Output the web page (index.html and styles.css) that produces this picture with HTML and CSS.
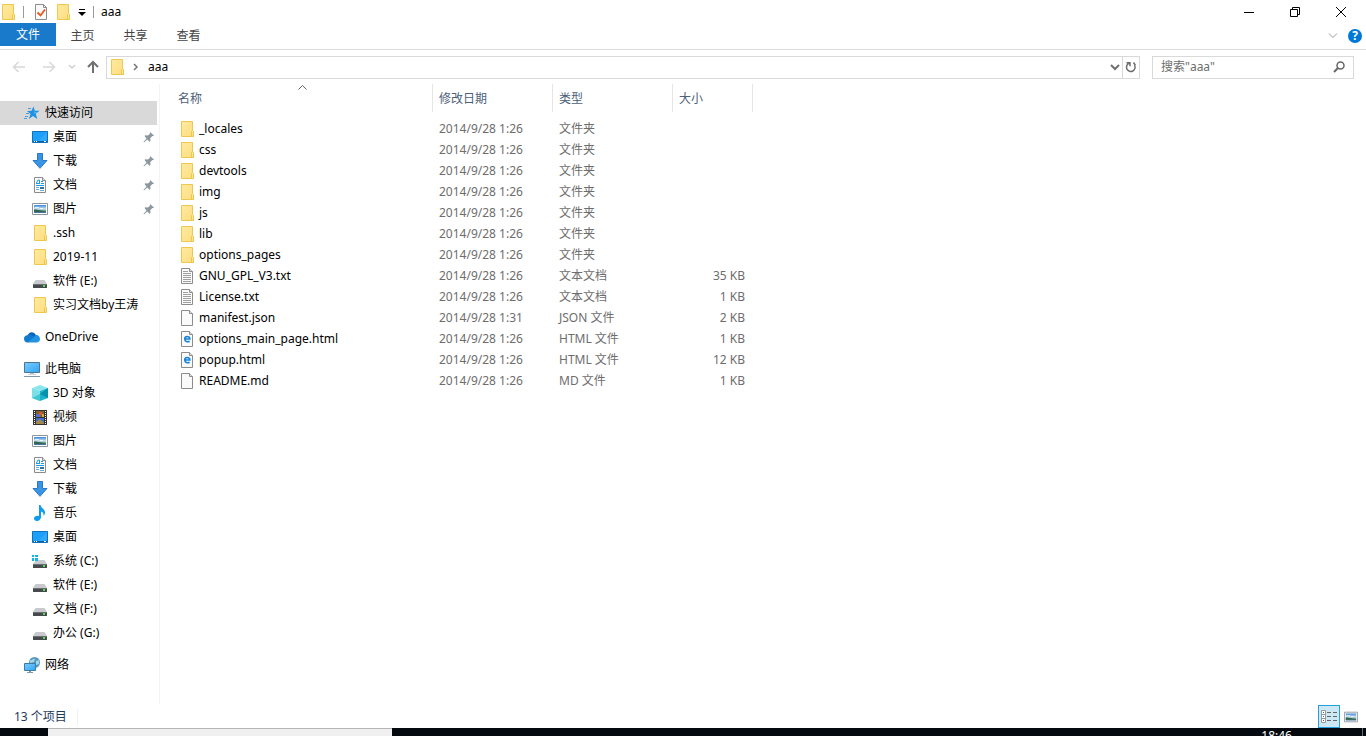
FILE: index.html
```html
<!DOCTYPE html>
<html lang="zh-CN">
<head>
    <meta charset="UTF-8">
    <title>aaa</title>
    <link rel="stylesheet" href="styles.css">
</head>
<body>
    <!-- icon sprite -->
    <svg class="sprite" xmlns="http://www.w3.org/2000/svg">
        <defs>
            <linearGradient id="gFolder" x1="0" y1="0" x2="1" y2="1"><stop offset="0" stop-color="#ffeaa0"/><stop offset="1" stop-color="#fddd80"/></linearGradient>
            <linearGradient id="gSky" x1="0" y1="0" x2="0" y2="1"><stop offset="0" stop-color="#3d86d8"/><stop offset="0.5" stop-color="#d4e8f4"/><stop offset="0.65" stop-color="#7fa9a6"/><stop offset="1" stop-color="#396aa0"/></linearGradient>
            <linearGradient id="gScreen" x1="0" y1="0" x2="1" y2="1"><stop offset="0" stop-color="#7bcbff"/><stop offset="1" stop-color="#2fa6f5"/></linearGradient>
        </defs>
        <symbol id="folder" viewBox="0 0 16 16">
            <path d="M2.500.5h11v9l1 1v5h-12z" fill="url(#gFolder)" stroke="#ecc850"/>
            <path d="M12.500 15V10.500l1-1 1 1v5z" fill="#ffe694" stroke="#ecc850"/>
        </symbol>
        <symbol id="page" viewBox="0 0 16 16">
            <path d="M2.500.5h8l3 3v12h-11z" fill="#fafafa" stroke="#8c8c8c"/>
            <path d="M10.500.5v3h3" fill="#e4e4e4" stroke="#8c8c8c"/>
        </symbol>
        <symbol id="text" viewBox="0 0 16 16">
            <use href="#page"/>
            <path d="M4 3.500h5M4 5.500h8M4 7.500h8M4 9.500h8M4 11.500h8M4 13.500h8" stroke="#a0a0a0"/>
        </symbol>
        <symbol id="html" viewBox="0 0 16 16">
            <use href="#page"/>
            <path d="M5.800 8h5c0-3.400-4.900-3.200-5-.1-.1 2.800 2.800 3.400 4.800 2.300" fill="none" stroke="#1683d8" stroke-width="1.700"/>
        </symbol>
        <symbol id="check" viewBox="0 0 16 16">
            <path d="M2.500.5h8l3 3v12h-11z" fill="#fafafa" stroke="#8c8c8c"/>
            <path d="M10.500.5v3h3" fill="none" stroke="#8c8c8c"/>
            <path d="M4.500 8.500l3 3 4.500-6" fill="none" stroke="#e8571b" stroke-width="1.800"/>
        </symbol>
        <symbol id="star" viewBox="0 0 16 16">
            <path d="M9.500 1.500l1.300 4.200 4.700.1-3.700 2.900 1.500 5.300-4.300-3-4.200 3 1.700-4.900-3.500-3.200 4.500-.1z" fill="#1f93e0"/>
            <path d="M9.500 4l1 3h3l-3 2z" fill="#4fb8f5"/>
            <path d="M4 3.500h3M2 8.500h3M1 11.500h3M0 13.500h3" stroke="#4c9ed8"/>
        </symbol>
        <symbol id="desktop" viewBox="0 0 16 16">
            <path d="M.5 2.500h15v11H.5z" fill="#1ca0fc" stroke="#1270b8"/>
            <path d="M15 3v8L5 13z" fill="#42b2ff" opacity=".5"/>
            <path d="M1 12.500h14" stroke="#0b60a4"/>
            <path d="M2 12.500h1M4 12.500h1M12 12.500h2" stroke="#fff"/>
        </symbol>
        <symbol id="download" viewBox="0 0 16 16">
            <path d="M5.500.5h5v7h4.500L8 15.300 1 7.500h4.500z" fill="#3b93e3" stroke="#2a79c8"/>
        </symbol>
        <symbol id="document" viewBox="0 0 16 16">
            <use href="#page"/>
            <path d="M4 6.500h3M9 4.500h2M9 6.500h3M4 8.500h8" stroke="#1e9be4"/>
            <path d="M4.500 6l1.500-3h1.500v4" fill="none" stroke="#1e9be4"/>
            <path d="M4 10.500h3M4 12.500h3M8 13.500h4" stroke="#6fb0d6"/>
            <path d="M8 10h4v2H8z" fill="#2c75a0"/>
        </symbol>
        <symbol id="picture" viewBox="0 0 16 16">
            <path d="M.5 2.500h15v11H.5z" fill="#fff" stroke="#8d959c"/>
            <path d="M2 4h12v8H2z" fill="url(#gSky)"/>
            <path d="M2 8.500c3 0 5 .5 12 2v.5H2z" fill="#35664f"/>
            <path d="M3 6.500h4M8 7.500h3" stroke="#fff" opacity=".8"/>
        </symbol>
        <symbol id="drive" viewBox="0 0 16 16">
            <path d="M3.500 7h9L15 11H1z" fill="#c8cbcd"/>
            <path d="M1 11h14v4H1z" fill="#464a4c"/>
            <path d="M1 11.500h14" stroke="#6c7072"/>
            <path d="M11 12h2v2h-2z" fill="#4fe04f"/>
        </symbol>
        <symbol id="system" viewBox="0 0 16 16">
            <path d="M4 7h8.500L15 11H1z" fill="#c8cbcd"/>
            <path d="M1 11h14v4H1z" fill="#464a4c"/>
            <path d="M1 11.500h14" stroke="#6c7072"/>
            <path d="M11 12h2v2h-2z" fill="#4fe04f"/>
            <path d="M0 2h2v2H0zM3 2h3v2H3zM0 5h2v3H0zM3 5h3v3H3z" fill="#0db4ee"/>
        </symbol>
        <symbol id="cloud" viewBox="0 0 16 16">
            <path d="M3.500 6.500C5 2.500 9.500 2 11.500 5.500L13 9 5 13z" fill="#0866ba"/>
            <path d="M3.500 6.200C1 6.300 0 8 0 9.800 0 12 1.500 13.500 3.500 13.500L13 9.500 8 6.500C6.500 5.700 5 5.700 3.500 6.200z" fill="#0f7bd0"/>
            <path d="M9 9l3-3c2-.5 4 1.500 4 4 0 2-1.500 3.500-3.500 3.500h-9z" fill="#2394e2"/>
        </symbol>
        <symbol id="pc" viewBox="0 0 16 16">
            <path d="M.5 1.500h15v10H.5z" fill="url(#gScreen)" stroke="#4b7795"/>
            <path d="M6 12.500h4" stroke="#b9c3ca"/>
            <path d="M4 13.500h8" stroke="#d0d6da"/>
            <path d="M0 15.500h16" stroke="#8197ab"/>
        </symbol>
        <symbol id="cube" viewBox="0 0 16 16">
            <path d="M0 3l8-3 8 3-8 3z" fill="#8ee6ec"/>
            <path d="M0 3l8 3v10l-8-3z" fill="#7be0e6"/>
            <path d="M0 13l8-4v7z" fill="#3fc5d4"/>
            <path d="M16 3L8 6v10l8-3z" fill="#19b4cb"/>
            <path d="M16 3v10L8 9z" fill="#0590ac"/>
        </symbol>
        <symbol id="video" viewBox="0 0 16 16">
            <path d="M1 1h14v15H1z" fill="#38332f"/>
            <path d="M4 2h8v6H4z" fill="#77672e"/>
            <path d="M4 5h4v3H4z" fill="#4d72d4"/>
            <path d="M7 3h3v3H7z" fill="#e4503b"/>
            <path d="M10 5h2v3h-2z" fill="#d5ac35"/>
            <path d="M4 9h8v6H4z" fill="#426dce"/>
            <path d="M4 13l4-3 4 4v1H4z" fill="#a38a4a"/>
            <path d="M2.500 2v13M13.500 2v13" stroke="#fff" stroke-dasharray="1 1"/>
        </symbol>
        <symbol id="music" viewBox="0 0 16 16">
            <path d="M7 0h1.500c.3 3 4.500 4 4.500 7.500 0 1.500-.6 2.500-1.500 3.500.5-3-1-4-2.500-4.500V12c0 2.200-1.600 4-4 4-1.800 0-3-1-3-2.500C2 11.500 4.500 10 7 11z" fill="#119bee"/>
        </symbol>
        <symbol id="network" viewBox="0 0 16 16">
            <circle cx="10.500" cy="5.500" r="5.500" fill="#5797bc"/>
            <path d="M6 3c2 1 3-2 5-1l-1 3-4 1zM12 4l3-1v4l-3 1z" fill="#a5d5e4"/>
            <path d="M.5 6.500h11v7H.5z" fill="url(#gScreen)" stroke="#397ca6"/>
            <path d="M5 14.500h2M3 15.500h6" stroke="#8197ab"/>
        </symbol>
        <symbol id="pin" viewBox="0 0 12 12">
            <path d="M7 1l4 3.500-1 .5-1 .3-1.800 2.200.3 2.500-1 .8-2.300-2.300L1 11.500l-.5-.5L3.500 7.500 1.500 5l.8-.8 2.500.2L6.800 3z" fill="#8b979f"/>
        </symbol>
    </svg>

    <header class="titlebar">
        <svg class="icon"><use href="#folder"/></svg>
        <span class="divider"></span>
        <button class="quick" aria-label="属性"><svg class="icon"><use href="#check"/></svg></button>
        <button class="quick" aria-label="新建文件夹"><svg class="icon"><use href="#folder"/></svg></button>
        <button class="customize" aria-label="自定义快速访问工具栏"><svg width="8" height="8" viewBox="0 0 8 8"><path d="M1 1.500h6" stroke="#000"/><path d="M0 4h8L4 8z"/></svg></button>
        <span class="divider"></span>
        <span class="title">aaa</span>
        <div class="window-buttons">
            <button aria-label="最小化"><svg width="12" height="12" viewBox="0 0 12 12"><path d="M1 6.500h10" stroke="#000"/></svg></button>
            <button aria-label="还原"><svg width="12" height="12" viewBox="0 0 12 12" fill="none" stroke="#000"><path d="M1.500 3.500h7v7h-7zM3.500 3V1.500h7v7H9"/></svg></button>
            <button aria-label="关闭"><svg width="12" height="12" viewBox="0 0 12 12" stroke="#000"><path d="M1 1l10 10M11 1L1 11"/></svg></button>
        </div>
    </header>

    <div class="ribbon">
        <button class="tab file-tab">文件</button>
        <button class="tab">主页</button>
        <button class="tab">共享</button>
        <button class="tab">查看</button>
        <div class="ribbon-right">
            <button aria-label="展开功能区"><svg width="10" height="6" viewBox="0 0 10 6" fill="none" stroke="#999"><path d="M1 .5l4 4 4-4"/></svg></button>
            <button class="help" aria-label="帮助">?</button>
        </div>
    </div>

    <div class="navbar">
        <button class="nav-back" aria-label="返回"><svg width="14" height="14" viewBox="0 0 14 14" fill="none" stroke="#d8d8d8" stroke-width="1.500"><path d="M13 7H2M6.500 2L1.500 7l5 5"/></svg></button>
        <button class="nav-forward" aria-label="前进"><svg width="14" height="14" viewBox="0 0 14 14" fill="none" stroke="#d8d8d8" stroke-width="1.500"><path d="M1 7h11M7.500 2l5 5-5 5"/></svg></button>
        <button class="nav-recent" aria-label="最近浏览的位置"><svg width="8" height="6" viewBox="0 0 8 6" fill="none" stroke="#d0d0d0" stroke-width="1.500"><path d="M1 1l3 3 3-3"/></svg></button>
        <button class="nav-up" aria-label="上移"><svg width="14" height="14" viewBox="0 0 14 14" fill="none" stroke="#707070" stroke-width="2"><path d="M7 13V2M2 7l5-5 5 5"/></svg></button>
        <div class="address">
            <svg class="icon"><use href="#folder"/></svg>
            <svg class="crumb-arrow" width="6" height="8" viewBox="0 0 6 8" fill="none" stroke="#777" stroke-width="1.500"><path d="M1 1l3 3-3 3"/></svg>
            <a class="crumb" href="#">aaa</a>
            <button class="history" aria-label="以前的位置"><svg width="10" height="7" viewBox="0 0 10 7" fill="none" stroke="#707070" stroke-width="2"><path d="M1 1l4 4 4-4"/></svg></button>
            <button class="refresh" aria-label="刷新"><svg width="12" height="12" viewBox="0 0 12 12" fill="none" stroke="#707070" stroke-width="1.500"><path d="M4 2.300A4.300 4.300 0 1 0 9.500 4M1.500 1.700H5v3.600M8.500 1.500l2 3"/></svg></button>
        </div>
        <div class="search">
            <input type="text" aria-label="搜索" placeholder="搜索&quot;aaa&quot;">
            <svg width="12" height="12" viewBox="0 0 12 12" fill="none" stroke="#666"><circle cx="7.500" cy="4.500" r="3.500" stroke-width="1.500"/><path d="M5 7l-4 4" stroke-width="2"/></svg>
        </div>
    </div>

    <div class="content">
        <nav class="sidebar">
            <ul>
                <li class="root selected"><a href="#"><svg class="icon"><use href="#star"/></svg>快速访问</a></li>
                <li><a href="#"><svg class="icon"><use href="#desktop"/></svg>桌面<svg class="pin"><use href="#pin"/></svg></a></li>
                <li><a href="#"><svg class="icon"><use href="#download"/></svg>下载<svg class="pin"><use href="#pin"/></svg></a></li>
                <li><a href="#"><svg class="icon"><use href="#document"/></svg>文档<svg class="pin"><use href="#pin"/></svg></a></li>
                <li><a href="#"><svg class="icon"><use href="#picture"/></svg>图片<svg class="pin"><use href="#pin"/></svg></a></li>
                <li><a href="#"><svg class="icon"><use href="#folder"/></svg>.ssh</a></li>
                <li><a href="#"><svg class="icon"><use href="#folder"/></svg>2019-11</a></li>
                <li><a href="#"><svg class="icon"><use href="#drive"/></svg>软件 (E:)</a></li>
                <li><a href="#"><svg class="icon"><use href="#folder"/></svg>实习文档by王涛</a></li>
            </ul>
            <ul>
                <li class="root"><a href="#"><svg class="icon"><use href="#cloud"/></svg>OneDrive</a></li>
            </ul>
            <ul>
                <li class="root"><a href="#"><svg class="icon"><use href="#pc"/></svg>此电脑</a></li>
                <li><a href="#"><svg class="icon"><use href="#cube"/></svg>3D 对象</a></li>
                <li><a href="#"><svg class="icon"><use href="#video"/></svg>视频</a></li>
                <li><a href="#"><svg class="icon"><use href="#picture"/></svg>图片</a></li>
                <li><a href="#"><svg class="icon"><use href="#document"/></svg>文档</a></li>
                <li><a href="#"><svg class="icon"><use href="#download"/></svg>下载</a></li>
                <li><a href="#"><svg class="icon"><use href="#music"/></svg>音乐</a></li>
                <li><a href="#"><svg class="icon"><use href="#desktop"/></svg>桌面</a></li>
                <li><a href="#"><svg class="icon"><use href="#system"/></svg>系统 (C:)</a></li>
                <li><a href="#"><svg class="icon"><use href="#drive"/></svg>软件 (E:)</a></li>
                <li><a href="#"><svg class="icon"><use href="#drive"/></svg>文档 (F:)</a></li>
                <li><a href="#"><svg class="icon"><use href="#drive"/></svg>办公 (G:)</a></li>
            </ul>
            <ul>
                <li class="root"><a href="#"><svg class="icon"><use href="#network"/></svg>网络</a></li>
            </ul>
        </nav>

        <main class="files">
            <table>
                <thead>
                    <tr>
                        <th class="col-name">名称<svg class="sort" width="9" height="5" viewBox="0 0 9 5" fill="none" stroke="#666"><path d="M.5 4.500l4-4 4 4"/></svg></th>
                        <th class="col-date">修改日期</th>
                        <th class="col-type">类型</th>
                        <th class="col-size">大小</th>
                    </tr>
                </thead>
                <tbody>
                    <tr><td><svg class="icon"><use href="#folder"/></svg>_locales</td><td>2014/9/28 1:26</td><td>文件夹</td><td></td></tr>
                    <tr><td><svg class="icon"><use href="#folder"/></svg>css</td><td>2014/9/28 1:26</td><td>文件夹</td><td></td></tr>
                    <tr><td><svg class="icon"><use href="#folder"/></svg>devtools</td><td>2014/9/28 1:26</td><td>文件夹</td><td></td></tr>
                    <tr><td><svg class="icon"><use href="#folder"/></svg>img</td><td>2014/9/28 1:26</td><td>文件夹</td><td></td></tr>
                    <tr><td><svg class="icon"><use href="#folder"/></svg>js</td><td>2014/9/28 1:26</td><td>文件夹</td><td></td></tr>
                    <tr><td><svg class="icon"><use href="#folder"/></svg>lib</td><td>2014/9/28 1:26</td><td>文件夹</td><td></td></tr>
                    <tr><td><svg class="icon"><use href="#folder"/></svg>options_pages</td><td>2014/9/28 1:26</td><td>文件夹</td><td></td></tr>
                    <tr><td><svg class="icon"><use href="#text"/></svg>GNU_GPL_V3.txt</td><td>2014/9/28 1:26</td><td>文本文档</td><td>35 KB</td></tr>
                    <tr><td><svg class="icon"><use href="#text"/></svg>License.txt</td><td>2014/9/28 1:26</td><td>文本文档</td><td>1 KB</td></tr>
                    <tr><td><svg class="icon"><use href="#page"/></svg>manifest.json</td><td>2014/9/28 1:31</td><td>JSON 文件</td><td>2 KB</td></tr>
                    <tr><td><svg class="icon"><use href="#html"/></svg>options_main_page.html</td><td>2014/9/28 1:26</td><td>HTML 文件</td><td>1 KB</td></tr>
                    <tr><td><svg class="icon"><use href="#html"/></svg>popup.html</td><td>2014/9/28 1:26</td><td>HTML 文件</td><td>12 KB</td></tr>
                    <tr><td><svg class="icon"><use href="#page"/></svg>README.md</td><td>2014/9/28 1:26</td><td>MD 文件</td><td>1 KB</td></tr>
                </tbody>
            </table>
        </main>
    </div>

    <footer class="statusbar">
        <span class="count">13 个项目</span>
        <button class="view active" aria-label="详细信息">
            <svg width="16" height="14" viewBox="0 0 16 14" fill="#fff" stroke="#999">
                <path d="M.5.5h4v12h-4zM.5 4.500h4M.5 8.500h4"/>
                <path d="M6 2.500h4M12 2.500h4M6 6.500h4M12 6.500h4M6 10.500h4M12 10.500h4" stroke="#666"/>
                <path d="M2 2.500h1" stroke="#2a7a4a"/><path d="M2 6.500h1" stroke="#2b88e0"/><path d="M2 10.500h1" stroke="#e02020"/>
            </svg>
        </button>
        <button class="view" aria-label="大缩略图"><svg width="14" height="14" viewBox="0 0 16 16"><use href="#picture"/></svg></button>
    </footer>

    <div class="taskbar">
        <div class="task-search"></div>
        <span class="clock">18:46</span>
        <span class="show-desktop"></span>
    </div>
</body>
</html>
```
FILE: styles.css
```css
* {
    box-sizing: border-box;
}

body {
    margin: 0;
    height: 100vh;
    display: flex;
    flex-direction: column;
    overflow: hidden;
    background-color: #fff;
    color: #000;
    font-family: "Noto Sans", "Noto Sans CJK SC", sans-serif;
    font-size: 12px;
    line-height: 16px;
}

button {
    display: flex;
    align-items: center;
    justify-content: center;
    padding: 0;
    border: none;
    background: none;
    font: inherit;
    color: inherit;
}

a {
    color: inherit;
    text-decoration: none;
}

svg {
    flex: none;
}

.sprite {
    position: absolute;
    width: 0;
    height: 0;
}

.icon {
    width: 16px;
    height: 16px;
}

/* title bar */
.titlebar {
    display: flex;
    align-items: center;
    height: 23px;
    flex: none;
}

.divider {
    width: 1px;
    height: 12px;
    margin: 0 6px 0 7px;
    background-color: #999;
}

.quick {
    width: 22px;
    height: 22px;
}

.customize {
    justify-content: flex-end;
    width: 12px;
    height: 22px;
}

.title {
    padding-left: 1px;
}

.window-buttons {
    display: flex;
    margin-left: auto;
    padding-right: 2px;
}

.window-buttons button {
    width: 46px;
    height: 21px;
}

/* ribbon */
.ribbon {
    display: flex;
    flex: none;
    height: 27px;
    border-bottom: 1px solid #dadbdc;
}

.tab {
    width: 53px;
    height: 26px;
    color: #444;
}

.file-tab {
    width: 56px;
    height: 23px;
    background-color: #1979ca;
    color: #fff;
}

.ribbon-right {
    display: flex;
    align-items: center;
    gap: 10px;
    margin-left: auto;
    padding-right: 4px;
}

.help {
    width: 14px;
    height: 14px;
    border-radius: 50%;
    background-color: #0078d7;
    color: #fff;
    font-weight: bold;
}

/* address bar */
.navbar {
    display: flex;
    align-items: center;
    flex: none;
    height: 34px;
    padding: 0 12px;
}

.nav-back,
.nav-forward {
    justify-content: flex-start;
    width: 30px;
    height: 24px;
}

.nav-recent {
    width: 8px;
    height: 24px;
    margin-left: -4px;
}

.nav-up {
    justify-content: flex-end;
    width: 24px;
    height: 24px;
    margin-right: 6px;
}

.address {
    display: flex;
    align-items: center;
    flex: 1;
    height: 23px;
    margin-right: 12px;
    padding-left: 2px;
    border: 1px solid #d9d9d9;
}

.crumb-arrow {
    margin: 0 9px 0 8px;
}

.history {
    width: 14px;
    height: 21px;
    margin-left: auto;
}

.refresh {
    width: 17px;
    height: 21px;
    border-left: 1px solid #d9d9d9;
}

.search {
    display: flex;
    align-items: center;
    width: 202px;
    height: 23px;
    padding: 0 8px;
    border: 1px solid #d9d9d9;
}

.search input {
    flex: 1;
    min-width: 0;
    padding: 0;
    border: none;
    outline: none;
    font: inherit;
}

.search input::placeholder {
    color: #6d6d6d;
}

/* main area */
.content {
    display: flex;
    flex: 1;
    min-height: 0;
}

.sidebar {
    width: 160px;
    padding-top: 17px;
    border-right: 1px solid #f3f3f3;
}

.sidebar ul {
    margin: 0 0 8px;
    padding: 0;
    list-style: none;
}

.sidebar a {
    display: flex;
    align-items: center;
    gap: 5px;
    height: 24px;
    margin-right: 2px;
    padding-left: 32px;
    padding-right: 2px;
}

.sidebar .root a {
    padding-left: 24px;
}

.sidebar .selected a {
    background-color: #d9d9d9;
}

.pin {
    width: 12px;
    height: 12px;
    margin-left: auto;
}

.files {
    flex: 1;
}

.files table {
    table-layout: fixed;
    width: 593px;
    border-spacing: 0;
    color: #6d6d6d;
}

.files th {
    height: 28px;
    padding: 2px 6px 0;
    border-right: 1px solid #e5e5e5;
    color: #4c607a;
    font-weight: normal;
    text-align: left;
}

.files .col-name {
    position: relative;
    width: 273px;
    padding-left: 18px;
}

.col-date,
.col-type {
    width: 120px;
}

.col-size {
    width: 80px;
}

.sort {
    position: absolute;
    top: 1px;
    left: 138px;
}

.files tbody::before {
    content: "";
    display: block;
    height: 6px;
}

.files td {
    height: 21px;
    padding: 0 6px;
}

.files td:first-child {
    padding-left: 19px;
    color: #000;
}

.files td:last-child {
    padding-right: 8px;
    text-align: right;
}

.files td .icon {
    margin-right: 4px;
    vertical-align: top;
}

/* status bar */
.statusbar {
    display: flex;
    align-items: center;
    flex: none;
    height: 24px;
    padding: 1px 4px 0 14px;
    color: #1e395b;
}

.count {
    margin-right: auto;
    padding-right: 10px;
    border-right: 1px solid #f0f0f0;
}

.view {
    width: 22px;
    height: 23px;
}

.view.active {
    border: 1px solid #26a0da;
    background-color: #cce8f4;
}

/* taskbar */
.taskbar {
    display: flex;
    flex: none;
    height: 8px;
    overflow: hidden;
    background-color: #03090f;
    color: #fff;
}

.task-search {
    width: 344px;
    margin-left: 48px;
    border-top: 1px solid #b5b5b5;
    background-color: #f0f0f0;
}

.clock {
    margin-left: auto;
    padding-right: 70px;
}

.show-desktop {
    width: 4px;
    border-left: 1px solid #6a6e72;
}
```
